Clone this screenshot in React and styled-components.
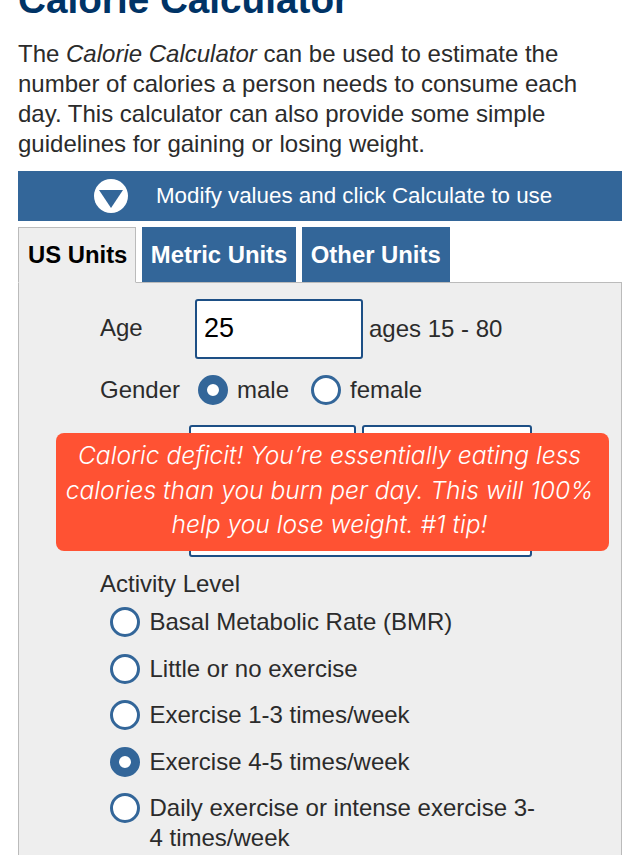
import React from "react";
import styled, { createGlobalStyle } from "styled-components";

const Global = createGlobalStyle`
  html, body { margin: 0; padding: 0; background: #fff; }
  body { font-family: "Liberation Sans", Arial, sans-serif; color: #2b2b2b; overflow: hidden; }
`;
const Page = styled.div`
  position: relative;
  width: 640px;
  height: 855px;
  overflow: hidden;
  box-sizing: border-box;
  padding: 0 18px;
`;
const Title = styled.h1`
  margin: -21px 0 0;
  font-size: 38.7px;
  line-height: 42px;
  font-weight: 700;
  color: #003366;
`;
const Intro = styled.p`
  margin: 18px 0 0;
  font-size: 24px;
  line-height: 30px;
  color: #2b2b2b;
`;
const Banner = styled.div`
  margin: 12px 0 0;
  height: 50px;
  background: #336699;
  color: #fff;
  font-size: 22.35px;
  display: flex;
  align-items: center;
  padding-left: 76px;
  gap: 28px;
`;
const Tabs = styled.div`
  margin-top: 6px;
  display: flex;
  align-items: flex-end;
  gap: 5.5px;
  height: 55px;
`;
const Tab = styled.div`
  box-sizing: border-box;
  height: ${p => (p.$active ? "56px" : "55px")};
  margin-bottom: ${p => (p.$active ? "-1px" : "0")};
  padding: ${p => (p.$active ? "0 8px 0 9px" : "0 9px")};
  display: flex;
  align-items: center;
  font-size: 23.85px;
  font-weight: 700;
  background: ${p => (p.$active ? "#eee" : "#336699")};
  color: ${p => (p.$active ? "#000" : "#fff")};
  border: ${p => (p.$active ? "1px solid #bbb" : "none")};
  border-bottom: ${p => (p.$active ? "1px solid #eee" : "none")};
  position: relative;
  z-index: 1;
`;
const Panel = styled.div`
  box-sizing: border-box;
  height: 600px;
  background: #eee;
  border: 1px solid #bbb;
  padding: 16px 0 0 81px;
`;
const Row = styled.div`
  display: flex;
  align-items: center;
`;
const AgeRow = styled(Row)`
  height: 60px;
`;
const Label = styled.span`
  font-size: 24px;
  color: #2b2b2b;
  width: ${p => p.$w || "auto"};
  padding-bottom: ${p => p.$lift || "0"};
  flex: none;
`;
const Field = styled.div`
  box-sizing: border-box;
  width: ${p => p.$w};
  height: ${p => p.$h || "60px"};
  background: #fff;
  border: 2px solid #1d4f85;
  border-radius: 3px;
  padding: 0 0 2px 7px;
  display: flex;
  align-items: center;
  font-size: 27px;
  color: #000;
  flex: none;
`;
const Hint = styled.span`
  margin-left: 6px;
  font-size: 24px;
  padding-bottom: 1px;
  color: #2b2b2b;
`;
const GenderRow = styled(Row)`
  margin-top: 2px;
  height: 58px;
`;
const RadioMark = styled.span`
  box-sizing: border-box;
  flex: none;
  width: 30px;
  height: 30px;
  border-radius: 50%;
  background: #fff;
  border: ${p => (p.$on ? "9px" : "3px")} solid #336699;
`;
const GenderOption = styled.span`
  display: flex;
  align-items: center;
  gap: 9px;
  font-size: 24px;
  margin-right: 22px;
  color: #2b2b2b;
`;
const HeightRow = styled(Row)`
  margin: 6px 0 0 89px;
  gap: 6px;
`;
const WeightRow = styled(Row)`
  margin: 60px 0 0 89px;
`;
const ActivityTitle = styled.div`
  margin-top: 12px;
  font-size: 24px;
  line-height: 30px;
  color: #2b2b2b;
`;
const ActivityList = styled.div`
  margin: 8px 0 0 10px;
  display: flex;
  flex-direction: column;
  gap: 16.5px;
`;
const ActivityItem = styled.div`
  display: flex;
  align-items: flex-start;
  gap: 9.5px;
  width: 430px;
  font-size: 24px;
  line-height: 30px;
  color: #2b2b2b;
`;
const Callout = styled.div`
  position: absolute;
  left: 56px;
  top: 433px;
  box-sizing: border-box;
  width: 553px;
  height: 118px;
  border-radius: 8px;
  background: #ff5233;
  color: #fff;
  font-family: Inter, sans-serif;
  font-style: italic;
  font-weight: 300;
  font-size: 24.6px;
  line-height: 34.5px;
  text-align: center;
  padding: 5px 6px 0 0;
`;
const Arrow = () => (
  <svg width="34" height="34" viewBox="0 0 34 34" aria-hidden="true">
    <circle cx="17" cy="17" r="17" fill="#fff" />
    <path d="M5 11 H29 L17 29 Z" fill="#336699" />
  </svg>
);
const activities = [
  "Basal Metabolic Rate (BMR)",
  "Little or no exercise",
  "Exercise 1-3 times/week",
  "Exercise 4-5 times/week",
  "Daily exercise or intense exercise 3-4 times/week",
];
export default function App() {
  return (
    <Page>
      <Global />
      <Title>Calorie Calculator</Title>
      <Intro>
        The <em>Calorie Calculator</em> can be used to estimate the number of calories a person needs to consume each day. This calculator can also provide some simple guidelines for gaining or losing weight.
      </Intro>
      <Banner>
        <Arrow />
        <span>Modify values and click Calculate to use</span>
      </Banner>
      <Tabs>
        <Tab $active>US Units</Tab>
        <Tab>Metric Units</Tab>
        <Tab>Other Units</Tab>
      </Tabs>
      <Panel>
        <AgeRow>
          <Label $w="95px" $lift="2px">Age</Label>
          <Field $w="168px">25</Field>
          <Hint>ages 15 - 80</Hint>
        </AgeRow>
        <GenderRow>
          <Label $w="98px">Gender</Label>
          <GenderOption><RadioMark $on />male</GenderOption>
          <GenderOption><RadioMark />female</GenderOption>
        </GenderRow>
        <HeightRow>
          <Field $w="167px" />
          <Field $w="170px" />
        </HeightRow>
        <WeightRow>
          <Field $w="343px" $h="12px" />
        </WeightRow>
        <ActivityTitle>Activity Level</ActivityTitle>
        <ActivityList>
          {activities.map((a, i) => (
            <ActivityItem key={a}>
              <RadioMark $on={i === 3} />
              <span>{a}</span>
            </ActivityItem>
          ))}
        </ActivityList>
      </Panel>
      <Callout>
        Caloric deficit! You’re essentially eating less<br />calories than you burn per day. This will 100%<br />help you lose weight. #1 tip!
      </Callout>
    </Page>
  );
}
